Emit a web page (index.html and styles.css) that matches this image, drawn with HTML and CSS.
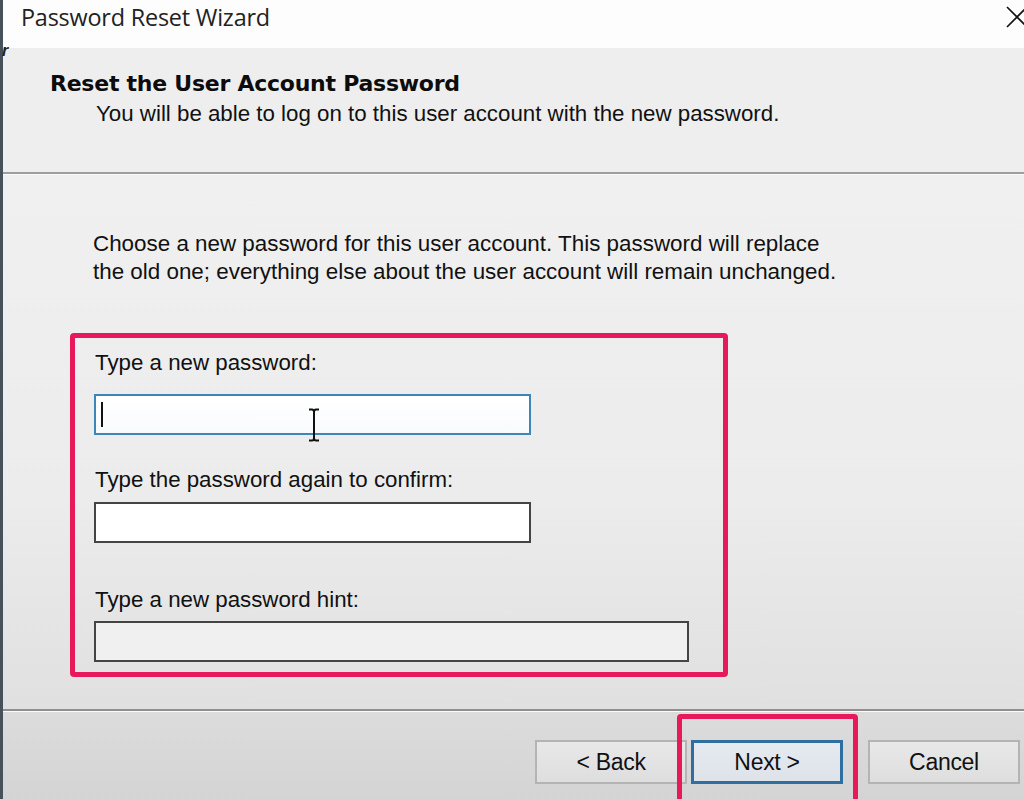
FILE: index.html
```html
<!DOCTYPE html>
<html>
<head>
<meta charset="utf-8">
<title>Password Reset Wizard</title>
<link rel="stylesheet" href="styles.css">
</head>
<body>
<div class="window">
  <div class="titlebar">
    <span class="title">Password Reset Wizard</span>
    <svg class="close" width="22" height="22" viewBox="0 0 22 22"><path d="M1 1 L21 21 M21 1 L1 21" stroke="#111" stroke-width="1.6" fill="none"/></svg>
  </div>
  <div class="header">
    <span class="stray">r</span>
    <h1 class="heading">Reset the User Account Password</h1>
    <p class="subheading">You will be able to log on to this user account with the new password.</p>
  </div>
  <div class="separator"></div>
  <div class="content">
    <p class="intro">Choose a new password for this user account. This password will replace<br>the old one; everything else about the user account will remain unchanged.</p>
    <div class="highlight">
      <label class="label">Type a new password:</label>
      <div class="field field-short field-focused"><span class="caret"></span>
        <svg class="ibeam" width="14" height="34" viewBox="0 0 14 34"><path d="M2 1.5 H5 Q7 1.5 7 4 V30 Q7 32.5 9 32.5 H12 M12 1.5 H9 Q7 1.5 7 4 M7 30 Q7 32.5 5 32.5 H2" stroke="#111" stroke-width="2" fill="none"/></svg>
      </div>
      <label class="label label-second">Type the password again to confirm:</label>
      <div class="field field-short"></div>
      <label class="label label-third">Type a new password hint:</label>
      <div class="field field-long field-hint"></div>
    </div>
  </div>
  <div class="separator separator-bottom"></div>
  <div class="footer">
    <button class="btn btn-back">&lt; Back</button>
    <div class="btn-wrap">
      <button class="btn btn-next">Next &gt;</button>
      <span class="mark"></span>
    </div>
    <button class="btn btn-cancel">Cancel</button>
  </div>
</div>
</body>
</html>
```
FILE: styles.css
```css
html, body {
  margin: 0;
  padding: 0;
  height: 100%;
  overflow: hidden;
}
body {
  font-family: "Liberation Sans", Arial, sans-serif;
  color: #111;
}
.window {
  height: 799px;
  border-left: 3px solid #46515a;
  display: flex;
  flex-direction: column;
  background: #efefef;
  position: relative;
}
.titlebar {
  height: 48px;
  background: #fdfdfd;
  display: flex;
  align-items: flex-start;
  justify-content: space-between;
  flex-shrink: 0;
}
.title {
  font-family: "Open Sans", "Noto Sans", sans-serif;
  font-size: 23.4px;
  color: #222;
  margin-left: 18px;
  margin-top: 0;
  line-height: 34px;
  letter-spacing: -0.2px;
}
.close {
  margin-top: 6px;
  margin-right: -4px;
}
.header {
  height: 124px;
  background: #eeeeee;
  position: relative;
  flex-shrink: 0;
}
.stray {
  position: absolute;
  left: -1px;
  top: -6px;
  font-size: 16px;
  font-style: italic;
  font-weight: bold;
  color: #222;
}
.heading {
  margin: 0;
  padding: 21px 0 0 47px;
  font-family: "DejaVu Sans", Verdana, sans-serif;
  font-weight: bold;
  font-size: 22px;
  line-height: 30px;
  letter-spacing: -0.25px;
  color: #0c0c0c;
}
.subheading {
  margin: 1px 0 0 93px;
  font-size: 22.3px;
  line-height: 27px;
}
.separator {
  height: 2px;
  background: #9e9e9e;
  border-bottom: 1px solid #fafafa;
  flex-shrink: 0;
}
.content {
  flex: 0 0 auto;
  height: 534px;
  background: linear-gradient(#f0f0f0, #ececec 60%, #e0e0e0);
  padding: 0 0 0 67px;
  box-sizing: border-box;
}
.intro {
  margin: 55px 0 0 23px;
  font-size: 22.4px;
  line-height: 27.5px;
}
.highlight {
  margin-top: 48px;
  border: 5px solid #e8195a;
  border-radius: 4px;
  padding: 12px 0 0 19px;
  display: flex;
  flex-direction: column;
  align-items: flex-start;
  box-sizing: border-box;
  width: 658px;
  height: 344px;
}
.label {
  font-size: 22.3px;
  line-height: 26px;
  margin-left: 1px;
}
.label-second { margin-top: 32px; }
.label-third { margin-top: 44px; }
.field {
  height: 41px;
  box-sizing: border-box;
  border: 2px solid #444;
  background: #fff;
  margin-top: 18px;
  position: relative;
}
.label-second + .field { margin-top: 9px; }
.label-third + .field { margin-top: 8px; }
.field-short { width: 437px; }
.field-long { width: 595px; }
.field-focused {
  border-color: #3d86b5;
  background: linear-gradient(#fff, #f8fbfd);
}
.field-hint {
  background: #f0f0f0;
}
.caret {
  position: absolute;
  left: 5px;
  top: 6px;
  width: 2px;
  height: 25px;
  background: #111;
}
.ibeam {
  position: absolute;
  left: 211px;
  top: 12px;
}
.separator-bottom {
  background: #8f8f8f;
}
.footer {
  flex: 1;
  background: linear-gradient(#dcdcdc, #d4d4d4);
  display: flex;
  align-items: flex-start;
  padding: 28px 0 0 532px;
  gap: 4px;
}
.btn {
  width: 152px;
  height: 44px;
  font-family: "Liberation Sans", Arial, sans-serif;
  font-size: 23px;
  letter-spacing: -0.3px;
  color: #111;
  background: linear-gradient(#e8e8e8, #dedede);
  border: 2px solid #b4b4b4;
  box-sizing: border-box;
  padding: 0;
}
.btn-wrap {
  position: relative;
}
.btn-next {
  border: 3px solid #2f6ea0;
  background: linear-gradient(#e4eaf0, #dde3e9);
}
.mark {
  position: absolute;
  left: -14px;
  top: -26px;
  width: 181px;
  height: 100px;
  border: 5px solid #e8195a;
  border-radius: 4px;
  box-sizing: border-box;
}
.btn-cancel {
  margin-left: 21px;
}
```
